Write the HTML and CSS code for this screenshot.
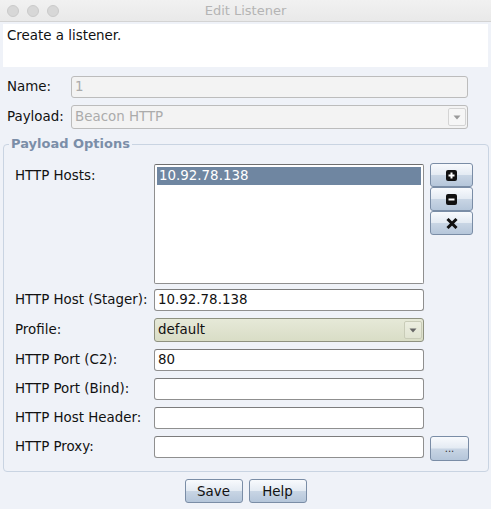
FILE: index.html
```html
<!DOCTYPE html>
<html>
<head>
<meta charset="utf-8">
<title>Edit Listener</title>
<link rel="stylesheet" href="styles.css">
</head>
<body>
<div class="window">
  <header class="titlebar">
    <div class="lights"><span class="light"></span><span class="light"></span><span class="light"></span></div>
    <div class="title">Edit Listener</div>
  </header>
  <div class="desc">Create a listener.</div>
  <div class="form-top">
    <span class="lbl">Name:</span>
    <div class="field disabled">1</div>
    <span class="lbl lbl-combo">Payload:</span>
    <div class="field disabled combo">
      <span class="val">Beacon HTTP</span>
      <span class="combo-btn"><svg width="8" height="5" viewBox="0 0 8 5"><path d="M0.5 0.5 H7.5 L4 4.5 Z" fill="#9a9a9a"/></svg></span>
    </div>
  </div>
  <fieldset class="options">
    <legend>Payload Options</legend>
    <div class="opt-body">
      <span class="lbl lbl-hosts">HTTP Hosts:</span>
      <div class="list">
        <div class="list-item selected">10.92.78.138</div>
      </div>
      <div class="list-btns">
        <button class="btn icon-btn" type="button" aria-label="Add">
          <svg width="11" height="11" viewBox="0 0 11 11"><rect width="11" height="11" rx="2" fill="#111"/><path d="M5.5 2.5 V8.5 M2.5 5.5 H8.5" stroke="#fff" stroke-width="2"/></svg>
        </button>
        <button class="btn icon-btn" type="button" aria-label="Remove">
          <svg width="11" height="11" viewBox="0 0 11 11"><rect width="11" height="11" rx="2" fill="#111"/><path d="M2.5 5.5 H8.5" stroke="#fff" stroke-width="2"/></svg>
        </button>
        <button class="btn icon-btn" type="button" aria-label="Clear">
          <svg width="12" height="11" viewBox="0 0 12 11"><path d="M1.5 1 L10.5 10 M10.5 1 L1.5 10" stroke="#111" stroke-width="3"/></svg>
        </button>
      </div>

      <span class="lbl">HTTP Host (Stager):</span>
      <div class="field">10.92.78.138</div>
      <span></span>

      <span class="lbl lbl-combo">Profile:</span>
      <div class="field combo profile">
        <span class="val">default</span>
        <span class="combo-btn"><svg width="8" height="5" viewBox="0 0 8 5"><path d="M0.5 0.5 H7.5 L4 4.5 Z" fill="#666"/></svg></span>
      </div>
      <span></span>

      <span class="lbl">HTTP Port (C2):</span>
      <div class="field">80</div>
      <span></span>

      <span class="lbl">HTTP Port (Bind):</span>
      <div class="field"></div>
      <span></span>

      <span class="lbl">HTTP Host Header:</span>
      <div class="field"></div>
      <span></span>

      <span class="lbl">HTTP Proxy:</span>
      <div class="field"></div>
      <button class="btn dots-btn" type="button">...</button>
    </div>
  </fieldset>
  <div class="actions">
    <button class="btn action-btn" type="button">Save</button>
    <button class="btn action-btn" type="button">Help</button>
  </div>
</div>
</body>
</html>
```

FILE: styles.css
```css
html, body {
  margin: 0;
  padding: 0;
}

body {
  width: 491px;
  height: 509px;
  overflow: hidden;
  background: #eff2f8;
  font-family: "DejaVu Sans", "Liberation Sans", sans-serif;
  font-size: 13.4px;
  color: #111;
}

.window {
  width: 491px;
  height: 509px;
  display: flex;
  flex-direction: column;
}

/* Title bar */
.titlebar {
  height: 21px;
  border-bottom: 1px solid #d3d3d3;
  background: linear-gradient(#f1f1f1, #e9e9e9);
  display: flex;
  align-items: center;
  position: relative;
}

.lights {
  display: flex;
  gap: 8px;
  padding-left: 7px;
}

.light {
  width: 10px;
  height: 10px;
  border-radius: 50%;
  background: #d7d7d7;
  border: 1px solid #cacaca;
}

.title {
  position: absolute;
  left: 0;
  right: 0;
  top: 0;
  line-height: 21px;
  text-align: center;
  color: #b4b4b4;
  font-size: 13px;
}

/* Description */
.desc {
  margin: 2px 3px 0 3px;
  height: 43px;
  background: #fff;
  padding: 4px 4px 0 4px;
  box-sizing: border-box;
  line-height: 16px;
}

/* Top form */
.form-top {
  margin-top: 9px;
  padding-left: 7px;
  display: grid;
  grid-template-columns: 58px 397px;
  column-gap: 6px;
  row-gap: 7px;
}

.lbl {
  line-height: 22px;
  white-space: nowrap;
}

.lbl-combo {
  line-height: 24px;
}

.field {
  height: 22px;
  box-sizing: border-box;
  border: 1px solid #8f8f8f;
  border-top-color: #7c7c7c;
  border-radius: 3px;
  background: #fff;
  padding: 0 3px;
  line-height: 20px;
  white-space: nowrap;
  overflow: hidden;
}

.field.disabled {
  background: #f3f3f3;
  border-color: #bcbcbc;
  color: #ababab;
}

.combo {
  height: 24px;
  line-height: 22px;
  display: flex;
  align-items: center;
  justify-content: space-between;
  padding-right: 1px;
}

.combo .val {
  flex: 1;
}

.combo-btn {
  width: 18px;
  height: 18px;
  box-sizing: border-box;
  border: 1px solid #d4d4d4;
  border-radius: 2px;
  background: #f6f6f6;
  display: flex;
  align-items: center;
  justify-content: center;
}

.field.profile {
  background: linear-gradient(#e6e9d8, #d9ddc6);
  border-color: #8e9180;
  color: #111;
}

.profile .combo-btn {
  background: linear-gradient(#eceee0, #e1e4d2);
  border-color: #c9ccb8;
}

/* Fieldset */
.options {
  margin: 8px 2px 0 3px;
  padding: 13px 0 10px 0;
  border: 1px solid #c9d4e2;
  border-radius: 4px;
  min-inline-size: 0;
}

.options legend {
  margin-left: 5px;
  padding: 0 2px;
  line-height: 14px;
  font-weight: bold;
  color: #7b8ea8;
  font-size: 13px;
}

.opt-body {
  padding-left: 11px;
  display: grid;
  grid-template-columns: 133px 270px 43px;
  grid-template-rows: 125px 29px 31px 29px 29px 29px 25px;
  column-gap: 6px;
  align-items: start;
}

.lbl-hosts {
  margin-top: 1px;
}

.list {
  height: 120px;
  box-sizing: border-box;
  border: 1px solid #8f8f8f;
  border-top-color: #6f6f6f;
  border-radius: 2px;
  background: #fff;
  padding: 2px;
}

.list-item {
  height: 18px;
  line-height: 18px;
  padding-left: 2px;
}

.list-item.selected {
  background: #6f86a1;
  color: #fff;
}

.list-btns {
  display: flex;
  flex-direction: column;
  margin-top: -1px;
}

/* Buttons */
.btn {
  box-sizing: border-box;
  border: 1px solid #7a8da6;
  border-radius: 3px;
  background: linear-gradient(#f8fafd 0%, #e4ebf3 48%, #c8d5e4 52%, #b5c6da 100%);
  font-family: "DejaVu Sans", "Liberation Sans", sans-serif;
  font-size: 13.4px;
  color: #111;
  padding: 0;
  margin: 0;
  display: flex;
  align-items: center;
  justify-content: center;
}

.icon-btn {
  width: 43px;
  height: 24px;
}

.dots-btn {
  width: 39px;
  height: 25px;
  font-size: 10px;
  line-height: 1;
  align-items: flex-end;
  padding-bottom: 6px;
  color: #333;
}

.actions {
  margin-top: 7px;
  display: flex;
  justify-content: center;
  gap: 6px;
}

.action-btn {
  width: 58px;
  height: 24px;
}
```
